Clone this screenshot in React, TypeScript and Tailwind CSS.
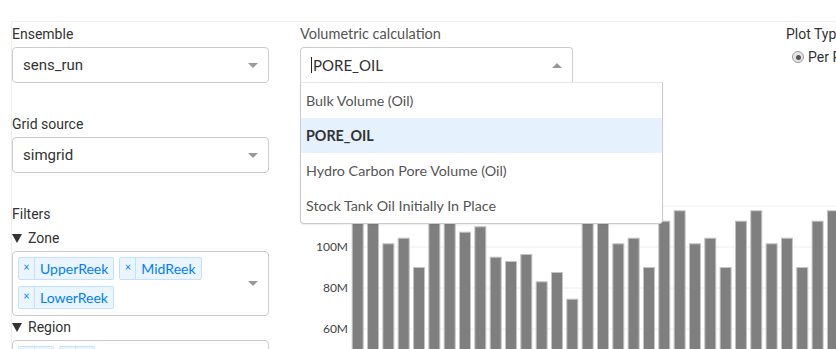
import React from 'react'

const roboto = "font-['Roboto',sans-serif]"
const geo = "font-['Lato',sans-serif]"

function Caret({ up = false }: { up?: boolean }) {
  return (
    <svg width="10" height="5" viewBox="0 0 10 5" className="block">
      {up ? <path d="M0 5 L5 0 L10 5 Z" fill="#999" /> : <path d="M0 0 L10 0 L5 5 Z" fill="#999" />}
    </svg>
  )
}

function Label({ children, className = '' }: { children: React.ReactNode; className?: string }) {
  return (
    <div className={`flex h-[22px] items-center text-[14px] leading-[22px] text-[#333] ${roboto} ${className}`}>
      {children}
    </div>
  )
}

function Select({ value }: { value: string }) {
  return (
    <div className="flex h-[36px] items-center rounded-[4px] border border-[#ccc] bg-white">
      <span className={`flex-1 pl-[10px] text-[15px] text-[#333] ${roboto}`}>{value}</span>
      <span className="flex w-[25px] justify-center pr-[5px]">
        <Caret />
      </span>
    </div>
  )
}

function Tag({ text }: { text: string }) {
  return (
    <div className={`flex h-[23px] items-stretch rounded-[2px] border border-[#c2e0ff] bg-[#ebf5ff] text-[#007eff] ${geo}`}>
      <span className="flex w-[16px] items-center justify-center border-r border-[#c2e0ff] pb-[3px] text-[11px]">×</span>
      <span className="flex items-center px-[5px] text-[14px]">{text}</span>
    </div>
  )
}

function Triangle() {
  return (
    <svg width="10" height="9" viewBox="0 0 10 9" className="mr-[6px] block">
      <path d="M0 0 L10 0 L5 9 Z" fill="#333" />
    </svg>
  )
}

const tops = [
  220.7, 210.3, 243.3, 237.7, 267, 209, 199, 231.7, 226.3, 256.7, 261, 254, 281.3, 272, 298.7, 220.7,
  210.3, 243.3, 237.7, 267, 220.7, 210.3, 243.3, 237.7, 267, 220.7, 210.3, 243.3, 237.7, 267, 220.7, 210.3,
]

function Chart() {
  const grid = [
    { y: 16, label: '' },
    { y: 57, label: '100M' },
    { y: 98, label: '80M' },
    { y: 139, label: '60M' },
  ]
  return (
    <svg width="536" height="160" className="block">
      {grid.map((g) => (
        <g key={g.y}>
          <line x1="51" x2="536" y1={g.y} y2={g.y} stroke="#eeeeee" strokeWidth="1" />
          {g.label && (
            <text x="48" y={g.y + 4} textAnchor="end" fontSize="12" fill="#444" fontFamily="Lato, sans-serif">
              {g.label}
            </text>
          )}
        </g>
      ))}
      {tops.map((t, i) => (
        <rect
          key={i}
          x={52.2 + i * 15.33}
          y={t - 190 + 0.5}
          width={11}
          height={170}
          fill="#7f7f7f"
          stroke="#c4c4c4"
          strokeWidth="1"
        />
      ))}
    </svg>
  )
}

const options = ['Bulk Volume (Oil)', 'PORE_OIL', 'Hydro Carbon Pore Volume (Oil)', 'Stock Tank Oil Initially In Place']

export default function App() {
  return (
    <div className="h-[349px] w-[836px] overflow-hidden bg-white">
      <div className="ml-[11px] mt-[21px] flex border-l border-t border-[#eeeeee] pt-[1px]">
        {/* left column */}
        <div className="w-[257px] shrink-0">
          <Label className="mb-[2px]">Ensemble</Label>
          <Select value="sens_run" />
          <Label className="mb-[2px] mt-[30px]">Grid source</Label>
          <Select value="simgrid" />
          <Label className="mb-[2px] mt-[30px]">Filters</Label>
          <Label className="mb-[2px]">
            <Triangle />
            Zone
          </Label>
          <div className="flex h-[65px] rounded-[4px] border border-[#ccc] bg-white">
            <div className="flex flex-1 flex-wrap content-start gap-x-[5px] gap-y-[6px] pl-[5px] pt-[5px]">
              <Tag text="UpperReek" />
              <Tag text="MidReek" />
              <Tag text="LowerReek" />
            </div>
            <span className="flex w-[25px] items-center justify-center pr-[5px]">
              <Caret />
            </span>
          </div>
          <Label className="mb-[2px]">
            <Triangle />
            Region
          </Label>
          <div className="flex h-[65px] rounded-[4px] border border-[#ccc] bg-white">
            <div className="flex flex-1 flex-wrap content-start gap-x-[5px] pl-[5px] pt-[5px]">
              <Tag text="1" />
              <Tag text="2" />
            </div>
          </div>
        </div>

        {/* right area */}
        <div className="ml-[31px] flex-1">
          <div className="flex">
            <div className="relative z-10 w-[273px] shrink-0">
              <div className={`mb-[2px] h-[22px] text-[14.5px] leading-[22px] text-[#555] ${geo}`}>Volumetric calculation</div>
              <div className="flex h-[36px] items-center rounded-t-[4px] border border-[#ccc] border-b-[#e6e6e6] bg-white">
                <span className={`flex flex-1 items-center pl-[10px] text-[15px] text-[#333] ${geo}`}>
                  <span className="mr-[1px] inline-block h-[16px] w-[1px] bg-[#222]" />
                  PORE_OIL
                </span>
                <span className="flex w-[25px] justify-center pr-[5px]">
                  <Caret up />
                </span>
              </div>
              <div className="absolute left-0 top-[59px] w-[363px] rounded-b-[4px] border border-[#ccc] border-t-[#e6e6e6] bg-white shadow-[0_1px_2px_rgba(0,0,0,0.08)]">
                {options.map((o) => (
                  <div
                    key={o}
                    className={`flex h-[35px] items-center pl-[5px] text-[14.3px] ${geo} ${
                      o === 'PORE_OIL' ? 'bg-[#e5f1fc] font-bold text-[#333]' : 'text-[#555]'
                    }`}
                  >
                    {o}
                  </div>
                ))}
              </div>
            </div>
            <div className={`ml-[213px] whitespace-nowrap text-[14px] text-[#333] ${roboto}`}>
              <div className="h-[22px] leading-[22px]">Plot Type</div>
              <div className="mt-[1px] flex items-center">
                <span className="ml-[6px] flex h-[12px] w-[12px] items-center justify-center rounded-full border border-[#999] bg-[#e6e6e6]">
                  <span className="h-[5px] w-[5px] rounded-full bg-[#555]" />
                </span>
                <span className="ml-[4px] leading-[22px]">Per Realization</span>
              </div>
            </div>
          </div>
          <div className="mt-[107px]">
            <Chart />
          </div>
        </div>
      </div>
    </div>
  )
}
